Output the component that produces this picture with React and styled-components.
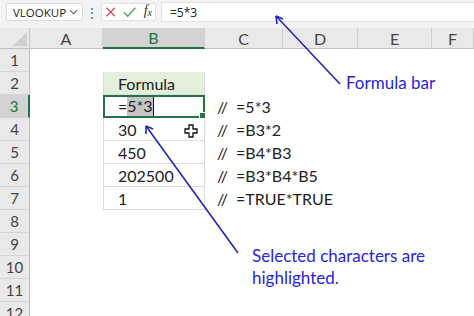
import React from "react";
import styled, { createGlobalStyle } from "styled-components";

const Global = createGlobalStyle`
  html, body { margin: 0; padding: 0; background: #ffffff; }
  body { font-family: Lato, "Liberation Sans", sans-serif; }
`;

const COLS = ["A", "B", "C", "D", "E", "F"];
const WIDTHS = "30px 73px 102px 78px 75px 74px 1fr";

const rows = [
  { n: 1 },
  { n: 2, b: "Formula", head: true },
  { n: 3, b: "=5*3", c: "=5*3", selected: true },
  { n: 4, b: "30", c: "=B3*2", cursor: true },
  { n: 5, b: "450", c: "=B4*B3" },
  { n: 6, b: "202500", c: "=B3*B4*B5" },
  { n: 7, b: "1", c: "=TRUE*TRUE" },
  { n: 8 },
  { n: 9 },
  { n: 10 },
  { n: 11 },
  { n: 12 },
];

const App = () => {
  return (
    <Page>
      <Global />
      <Toolbar>
        <NameBox>
          <span>VLOOKUP</span>
          <Chevron viewBox="0 0 10 6">
            <path d="M1 1 L5 5 L9 1" fill="none" stroke="#555" strokeWidth="1.2" />
          </Chevron>
        </NameBox>
        <Dots>⋮</Dots>
        <ButtonBox>
          <svg width="12" height="12" viewBox="0 0 12 12">
            <path d="M1.5 1.5 L10.5 10.5 M10.5 1.5 L1.5 10.5" stroke="#e0474f" strokeWidth="1.3" />
          </svg>
          <svg width="14" height="12" viewBox="0 0 14 12">
            <path d="M1 6.5 L5 10.5 L13 1.5" fill="none" stroke="#4aa55a" strokeWidth="1.3" />
          </svg>
          <Fx>
            f<sub>x</sub>
          </Fx>
        </ButtonBox>
        <FormulaBox>=5*3</FormulaBox>
      </Toolbar>

      <Sheet>
        <Corner>
          <svg width="14" height="14" viewBox="0 0 14 14">
            <path d="M14 0 L14 14 L0 14 Z" fill="#cfcfcf" />
          </svg>
        </Corner>
        {COLS.map((c) => (
          <ColHead key={c} $active={c === "B"}>
            {c}
          </ColHead>
        ))}
        {rows.map((r) => (
          <React.Fragment key={r.n}>
            <RowHead $active={r.selected}>{r.n}</RowHead>
            <Cell />
            <Cell
              $bordered={r.b !== undefined}
              $fill={r.head}
              $selected={r.selected}
            >
              {r.selected ? (
                <>
                  =<Highlight>5*3</Highlight>
                  <Handle />
                </>
              ) : (
                r.b
              )}
              {r.cursor && <CrossCursor />}
            </Cell>
            <NoteCell>{r.c ? `//  ${r.c}` : ""}</NoteCell>
            <Cell />
            <Cell />
            <Cell />
          </React.Fragment>
        ))}
      </Sheet>

      <Overlay viewBox="0 0 474 316">
        <line x1="340" y1="84" x2="276" y2="16" stroke="#2424b8" strokeWidth="1.6" />
        <path d="M276 16 L277 24 M276 16 L283 19" stroke="#2424b8" strokeWidth="1.6" fill="none" />
        <line x1="238" y1="253" x2="146" y2="126" stroke="#2424b8" strokeWidth="1.6" />
        <path d="M146 126 L146 134 M146 126 L153 129" stroke="#2424b8" strokeWidth="1.6" fill="none" />
      </Overlay>

      <Note style={{ left: 346, top: 72 }}>Formula bar</Note>
      <Note style={{ left: 252, top: 245 }}>
        Selected characters are
        <br />
        highlighted.
      </Note>
    </Page>
  );
};

const CrossCursor = () => (
  <CursorIcon viewBox="0 0 14 14">
    <path
      d="M5 1 H9 V5 H13 V9 H9 V13 H5 V9 H1 V5 H5 Z"
      fill="#fff"
      stroke="#111"
      strokeWidth="1.3"
    />
  </CursorIcon>
);

const Page = styled.div`
  position: relative;
  width: 474px;
  height: 316px;
  overflow: hidden;
  background: #ffffff;
`;

const Toolbar = styled.div`
  display: flex;
  align-items: center;
  height: 28px;
  padding: 0 0 4px 6px;
  box-sizing: border-box;
  background: #f3f3f3;
  font-family: "Open Sans", "Liberation Sans", sans-serif;
  font-size: 11.5px;
  color: #222;
`;

const NameBox = styled.div`
  display: flex;
  align-items: center;
  justify-content: space-between;
  width: 77px;
  height: 18px;
  padding: 0 4px 0 6px;
  box-sizing: border-box;
  background: #fff;
  border: 1px solid #dadada;
  border-radius: 2px;
`;

const Chevron = styled.svg`
  width: 9px;
  height: 6px;
`;

const Dots = styled.span`
  width: 18px;
  text-align: center;
  font-size: 12px;
  color: #555;
`;

const ButtonBox = styled.div`
  display: flex;
  align-items: center;
  gap: 7px;
  height: 18px;
  width: 55px;
  padding: 0 3px;
  box-sizing: border-box;
  background: #fff;
  border: 1px solid #e2e2e2;
  border-radius: 2px;
`;

const Fx = styled.span`
  font-family: "Liberation Serif", serif;
  font-style: italic;
  font-size: 14px;
  line-height: 14px;
  color: #333;
  sub {
    font-size: 10px;
    vertical-align: -1px;
  }
`;

const FormulaBox = styled.div`
  flex: 1;
  height: 18px;
  margin-left: 5px;
  padding-left: 8px;
  display: flex;
  align-items: center;
  background: #fff;
  border: 1px solid #e2e2e2;
  border-right: none;
  font-size: 12px;
`;

const Sheet = styled.div`
  display: grid;
  grid-template-columns: ${WIDTHS};
  grid-template-rows: 21px;
  grid-auto-rows: 23px;
  font-size: 16px;
  color: #222;
`;

const Corner = styled.div`
  display: flex;
  align-items: flex-end;
  justify-content: flex-end;
  padding: 0 2px 2px 0;
  background: #e9e9e9;
  border-right: 1px solid #c8c8c8;
  border-bottom: 1px solid #c0c0c0;
`;

const ColHead = styled.div`
  display: flex;
  align-items: center;
  justify-content: center;
  background: ${(p) => (p.$active ? "#d3d3d3" : "#e9e9e9")};
  color: ${(p) => (p.$active ? "#217346" : "#444")};
  border-right: 1px solid #cfcfcf;
  border-bottom: ${(p) => (p.$active ? "2px solid #217346" : "1px solid #c0c0c0")};
  font-size: 16px;
`;

const RowHead = styled.div`
  display: flex;
  align-items: center;
  justify-content: center;
  background: ${(p) => (p.$active ? "#d3d3d3" : "#e9e9e9")};
  color: ${(p) => (p.$active ? "#217346" : "#444")};
  border-right: ${(p) => (p.$active ? "2px solid #217346" : "1px solid #c0c0c0")};
  border-bottom: 1px solid #d4d4d4;
  font-size: 15px;
`;

const Cell = styled.div`
  position: relative;
  display: flex;
  align-items: center;
  padding-left: 14px;
  white-space: nowrap;
  box-sizing: border-box;
  background: ${(p) => (p.$fill ? "#e2efda" : "transparent")};
  border-left: ${(p) => (p.$bordered ? "1px solid #dcdcdc" : "none")};
  border-right: ${(p) => (p.$bordered ? "1px solid #dcdcdc" : "none")};
  border-bottom: ${(p) => (p.$bordered ? "1px solid #dcdcdc" : "none")};
  outline: ${(p) => (p.$selected ? "2px solid #217346" : "none")};
  outline-offset: -2px;
`;

const NoteCell = styled.div`
  display: flex;
  align-items: center;
  padding-left: 12px;
  white-space: pre;
  overflow: visible;
`;

const Highlight = styled.span`
  display: inline-block;
  height: 22px;
  line-height: 22px;
  background: #c6c6c6;
  border-right: 1px solid #111;
`;

const Handle = styled.span`
  position: absolute;
  right: -2px;
  bottom: -2px;
  width: 5px;
  height: 5px;
  background: #217346;
  border: 1px solid #fff;
`;

const CursorIcon = styled.svg`
  position: absolute;
  left: 80px;
  top: 6px;
  width: 14px;
  height: 14px;
`;

const Overlay = styled.svg`
  position: absolute;
  left: 0;
  top: 0;
  width: 474px;
  height: 316px;
  pointer-events: none;
`;

const Note = styled.div`
  position: absolute;
  color: #2626d9;
  font-size: 17px;
  line-height: 22px;
  white-space: nowrap;
`;

export default App;
